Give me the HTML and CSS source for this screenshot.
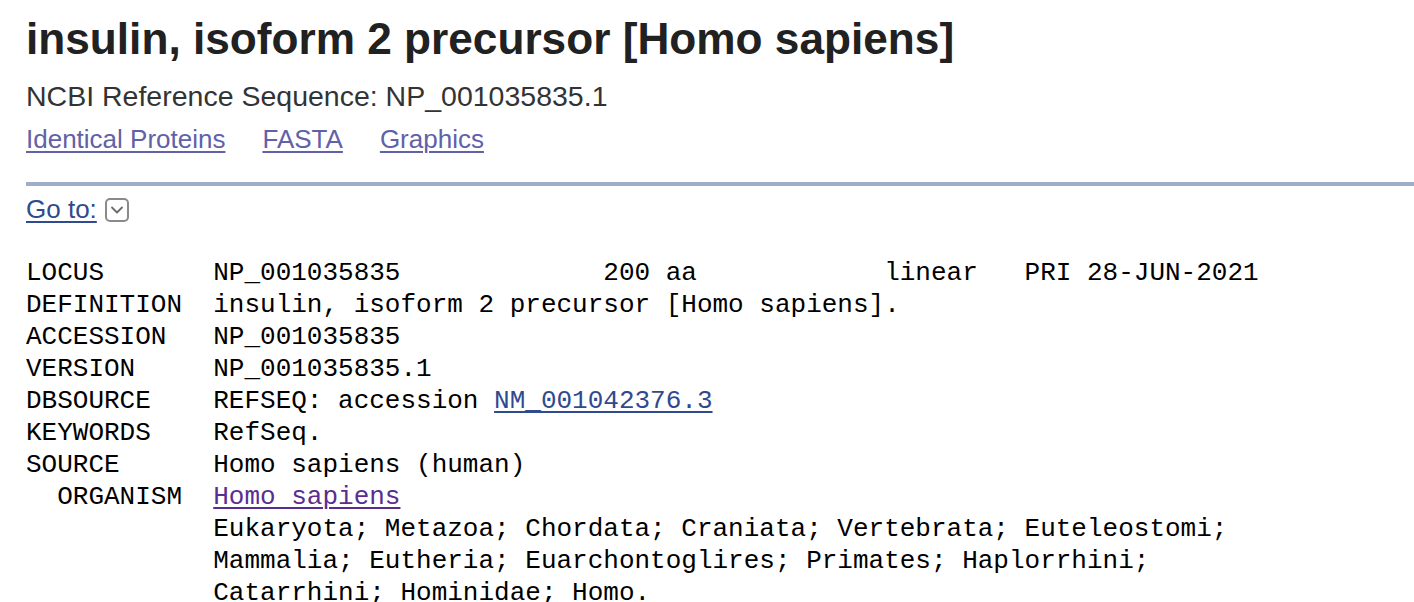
FILE: index.html
```html
<!DOCTYPE html>
<html lang="en">
<head>
<meta charset="utf-8">
<title>insulin, isoform 2 precursor [Homo sapiens] - Protein - NCBI</title>
<link rel="stylesheet" href="styles.css">
</head>
<body>
<div class="page">
  <h1 class="title">insulin, isoform 2 precursor [Homo sapiens]</h1>
  <p class="subtitle">NCBI Reference Sequence: NP_001035835.1</p>
  <div class="links">
    <a href="#" class="visited">Identical Proteins</a>
    <a href="#" class="visited">FASTA</a>
    <a href="#" class="visited">Graphics</a>
  </div>
  <div class="rule"></div>
  <div class="goto">
    <a href="#" class="goto-link">Go to:</a>
    <span class="goto-btn"><svg width="14" height="10" viewBox="0 0 14 10"><path d="M2 2.5 L7 7.5 L12 2.5" fill="none" stroke="#6b6b6b" stroke-width="1.8" stroke-linecap="round" stroke-linejoin="round"/></svg></span>
  </div>
<pre class="gb">LOCUS       NP_001035835             200 aa            linear   PRI 28-JUN-2021
DEFINITION  insulin, isoform 2 precursor [Homo sapiens].
ACCESSION   NP_001035835
VERSION     NP_001035835.1
DBSOURCE    REFSEQ: accession <a href="#" class="seqlink">NM_001042376.3</a>
KEYWORDS    RefSeq.
SOURCE      Homo sapiens (human)
  ORGANISM  <a href="#" class="orglink">Homo sapiens</a>
            Eukaryota; Metazoa; Chordata; Craniata; Vertebrata; Euteleostomi;
            Mammalia; Eutheria; Euarchontoglires; Primates; Haplorrhini;
            Catarrhini; Hominidae; Homo.
</pre>
</div>
</body>
</html>
```

FILE: styles.css
```css
html, body {
  margin: 0;
  padding: 0;
  background: #ffffff;
}

body {
  font-family: Arial, "Liberation Sans", Helvetica, sans-serif;
  color: #222222;
  overflow: hidden;
}

.page {
  padding: 13px 0 0 26px;
}

.title {
  margin: 0;
  font-size: 44.2px;
  line-height: 52px;
  font-weight: bold;
  color: #212121;
  white-space: nowrap;
}

.subtitle {
  margin: 13px 0 0;
  font-size: 28.5px;
  line-height: 36px;
  color: #333333;
  white-space: nowrap;
}

.links {
  margin-top: 8px;
  display: flex;
  gap: 37px;
  font-size: 26px;
  line-height: 34px;
}

.links a {
  color: #6161a8;
  text-decoration: underline;
  text-decoration-thickness: 2px;
  text-underline-offset: 3px;
}

.rule {
  margin-top: 26px;
  height: 4px;
  background: #9eaec8;
}

.goto {
  margin-top: 7px;
  display: flex;
  align-items: center;
  gap: 8px;
  font-size: 26px;
  line-height: 32px;
}

.goto-link {
  color: #2f4a8e;
  text-decoration: underline;
  text-decoration-thickness: 2px;
  text-underline-offset: 3px;
}

.goto-btn {
  display: inline-flex;
  align-items: center;
  justify-content: center;
  width: 24px;
  height: 24px;
  border: 2px solid #8a8a8a;
  border-radius: 5px;
  box-sizing: border-box;
  margin-top: 1px;
}

.gb {
  margin: 32px 0 0;
  font-family: "Courier New", "Liberation Mono", monospace;
  font-size: 26px;
  line-height: 32px;
  color: #000000;
  white-space: pre;
}

.gb a {
  text-decoration: underline;
  text-decoration-thickness: 2px;
  text-underline-offset: 3px;
}

.seqlink {
  color: #2f4a8e;
}

.orglink {
  color: #5a2d91;
}
```
